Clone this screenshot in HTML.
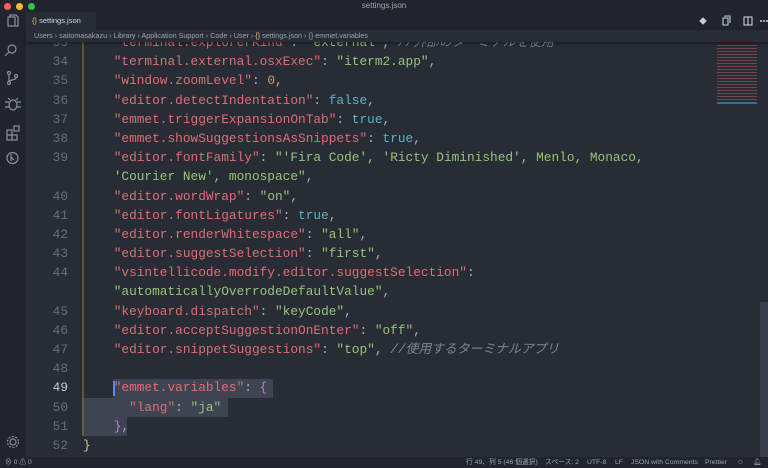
<!DOCTYPE html>
<html><head><meta charset="utf-8"><style>
*{margin:0;padding:0;box-sizing:border-box}
body{width:768px;height:468px;overflow:hidden;background:#282c34;font-family:"Liberation Sans","Noto Sans CJK JP",sans-serif;position:relative}
.title{position:absolute;left:0;top:0;width:768px;height:12px;background:#21252b;color:#9da5b4;font-size:8px;text-align:center;line-height:12px}
.dot{position:absolute;top:3px;width:7px;height:7px;border-radius:50%}
.act{position:absolute;left:0;top:12px;width:26px;height:445px;background:#21252b}
.tabs{position:absolute;left:26px;top:12px;width:742px;height:18px;background:#21252b}
.tab{position:absolute;left:0;top:0;width:70px;height:18px;background:#282c34;color:#d7dae0;font-size:7.5px;line-height:18px;padding-left:6px}
.bc{position:absolute;left:26px;top:30px;width:742px;height:12px;background:#282c34;color:#9da5b4;font-size:7.2px;line-height:12px;padding-left:8px;z-index:3;box-shadow:0 2px 3px rgba(0,0,0,.35)}
.status{position:absolute;left:0;top:457px;width:768px;height:11px;background:#21252b;color:#9da5b4;font-size:6.8px;line-height:11px}
.code{position:absolute;left:26px;top:42px;width:734px;height:415px;overflow:hidden}
.in{position:absolute;left:0;top:-9px;font-family:"Liberation Mono","Noto Sans CJK JP",monospace;font-size:12.8px;width:734px}
.r{height:19.2px;line-height:19.2px;position:relative;white-space:pre}
.n{display:inline-block;width:42px;text-align:right;color:#636d83;margin-right:15px}
.n.c{color:#c8ccd4}
.k{color:#e06c75}.s{color:#98c379}.b{color:#56b6c2}.o{color:#d19a66}.m{color:#7f848e;font-style:italic}.p{color:#abb2bf}.v{color:#c678dd}.y{color:#e5c07b}
.sel{position:absolute;background:#3e4451;height:19.2px}
svg{position:absolute}
</style></head><body>
<div class="title">settings.json
<div class="dot" style="left:4px;background:#ff5f57"></div><div class="dot" style="left:16px;background:#febc2e"></div><div class="dot" style="left:28px;background:#28c840"></div></div>
<div class="act">
<svg width="26" height="445" viewBox="0 0 26 445" fill="none" stroke="#8a909b" stroke-width="1.2">
<rect x="8" y="5" width="7" height="9"/><path d="M10 5V3h6l2 2v9h-3"/>
<circle cx="12" cy="37" r="4"/><path d="M9 40l-4 4"/>
<circle cx="9" cy="61" r="1.5"/><circle cx="9" cy="71" r="1.5"/><circle cx="16" cy="64" r="1.5"/><path d="M9 62.5v7M16 65.5c0 3-7 2-7 4"/>
<ellipse cx="13" cy="93" rx="4" ry="5"/><path d="M5 90h4M17 90h4M5 95h4M17 95h4M10 88l-2-2M16 88l2-2"/>
<rect x="7" y="118" width="5" height="5"/><rect x="7" y="123" width="5" height="5"/><rect x="12" y="123" width="5" height="5"/><rect x="14" y="114" width="5" height="5"/>
<circle cx="12.5" cy="146" r="5.5"/><path d="M11 142v7M11 145l3 3"/>
<circle cx="13" cy="430" r="3"/><circle cx="13" cy="430" r="5.5" stroke-dasharray="2 1.5"/>
</svg></div>
<div class="tabs"><div class="tab"><span style="color:#e5c07b">{}</span> settings.json</div>
<svg width="742" height="18" viewBox="0 0 742 18" fill="none" stroke="#c8ccd4" stroke-width="1.1">
<path d="M677 6l3 3-3 3-3-3z" fill="#c8ccd4"/><path d="M697 6h5v7h-5zM699 5v-1h5v7"/><rect x="718" y="5" width="8" height="8"/><path d="M722 5v8"/>
<circle cx="738" cy="9" r=".5" fill="#c8ccd4"/><circle cx="741" cy="9" r=".5" fill="#c8ccd4"/><circle cx="735" cy="9" r=".5" fill="#c8ccd4"/>
</svg></div>
<div class="bc">Users › saitomasakazu › Library › Application Support › Code › User › <span style="color:#e5c07b">{}</span> settings.json › {} emmet.variables</div>
<div class="code"><div class="in"><div class="sel" style="left:87px;top:345.6px;width:160px"></div><div class="sel" style="left:56px;top:364.8px;width:146px"></div><div class="sel" style="left:56px;top:384px;width:45px"></div><div style="position:absolute;left:56px;top:9px;width:2px;height:394px;background:#7a6a2a;opacity:.7"></div><div style="position:absolute;left:87px;top:348px;width:1.5px;height:15px;background:#528bff"></div><div class="r"><span class="n">33</span>    <span class="k">"terminal.explorerKind"</span><span class="p">: </span><span class="s">"external"</span><span class="p">, </span><span class="m">//外部のターミナルを使用</span></div><div class="r"><span class="n">34</span>    <span class="k">"terminal.external.osxExec"</span><span class="p">: </span><span class="s">"iterm2.app"</span><span class="p">,</span></div><div class="r"><span class="n">35</span>    <span class="k">"window.zoomLevel"</span><span class="p">: </span><span class="o">0</span><span class="p">,</span></div><div class="r"><span class="n">36</span>    <span class="k">"editor.detectIndentation"</span><span class="p">: </span><span class="b">false</span><span class="p">,</span></div><div class="r"><span class="n">37</span>    <span class="k">"emmet.triggerExpansionOnTab"</span><span class="p">: </span><span class="b">true</span><span class="p">,</span></div><div class="r"><span class="n">38</span>    <span class="k">"emmet.showSuggestionsAsSnippets"</span><span class="p">: </span><span class="b">true</span><span class="p">,</span></div><div class="r"><span class="n">39</span>    <span class="k">"editor.fontFamily"</span><span class="p">: </span><span class="s">"'Fira Code', 'Ricty Diminished', Menlo, Monaco,</span></div><div class="r"><span class="n"></span>    <span class="s">'Courier New', monospace"</span><span class="p">,</span></div><div class="r"><span class="n">40</span>    <span class="k">"editor.wordWrap"</span><span class="p">: </span><span class="s">"on"</span><span class="p">,</span></div><div class="r"><span class="n">41</span>    <span class="k">"editor.fontLigatures"</span><span class="p">: </span><span class="b">true</span><span class="p">,</span></div><div class="r"><span class="n">42</span>    <span class="k">"editor.renderWhitespace"</span><span class="p">: </span><span class="s">"all"</span><span class="p">,</span></div><div class="r"><span class="n">43</span>    <span class="k">"editor.suggestSelection"</span><span class="p">: </span><span class="s">"first"</span><span class="p">,</span></div><div class="r"><span class="n">44</span>    <span class="k">"vsintellicode.modify.editor.suggestSelection"</span><span class="p">:</span></div><div class="r"><span class="n"></span>    <span class="s">"automaticallyOverrodeDefaultValue"</span><span class="p">,</span></div><div class="r"><span class="n">45</span>    <span class="k">"keyboard.dispatch"</span><span class="p">: </span><span class="s">"keyCode"</span><span class="p">,</span></div><div class="r"><span class="n">46</span>    <span class="k">"editor.acceptSuggestionOnEnter"</span><span class="p">: </span><span class="s">"off"</span><span class="p">,</span></div><div class="r"><span class="n">47</span>    <span class="k">"editor.snippetSuggestions"</span><span class="p">: </span><span class="s">"top"</span><span class="p">, </span><span class="m">//使用するターミナルアプリ</span></div><div class="r"><span class="n">48</span></div><div class="r"><span class="n c">49</span>    <span class="k">"emmet.variables"</span><span class="p">: </span><span class="v">{</span></div><div class="r"><span class="n">50</span>      <span class="k">"lang"</span><span class="p">: </span><span class="s">"ja"</span></div><div class="r"><span class="n">51</span>    <span class="v">}</span><span class="p">,</span></div><div class="r"><span class="n">52</span><span class="y">}</span></div></div></div>
<div style="position:absolute;left:717px;top:44px;width:40px;height:60px;opacity:.55;background:repeating-linear-gradient(#282c34 0 1px,#b85660 1px 2px,#282c34 2px 3px)"></div>
<div style="position:absolute;left:717px;top:102px;width:40px;height:2px;background:#2e6da4"></div>
<div style="position:absolute;left:760px;top:302px;width:8px;height:155px;background:#3a3f4b"></div>
<div class="status"><span style="margin-left:5px">⊗ 0 ⚠ 0</span>
<span style="position:absolute;left:466px">行 49、列 5 (46 個選択)</span>
<span style="position:absolute;left:545px">スペース: 2</span>
<span style="position:absolute;left:587px">UTF-8</span>
<span style="position:absolute;left:615px">LF</span>
<span style="position:absolute;left:631px">JSON with Comments</span>
<span style="position:absolute;left:705px">Prettier</span>
<span style="position:absolute;left:737px">☺</span>
<span style="position:absolute;left:753px">🔔︎</span></div>
</body></html>
